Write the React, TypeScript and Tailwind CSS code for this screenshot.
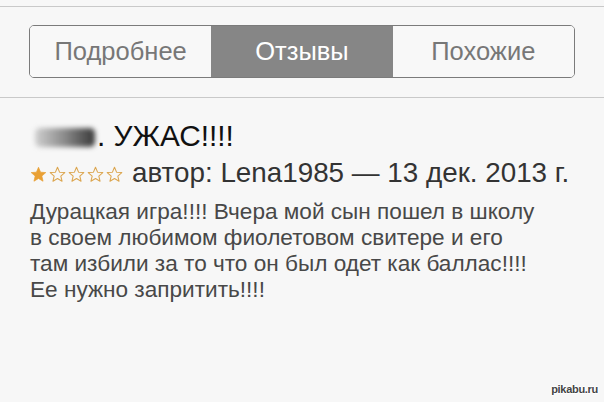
import React from "react";

function Star({ filled }: { filled: boolean }) {
  return (
    <svg width="17" height="17" viewBox="0 0 24 24" className="shrink-0">
      <path
        d="M12 1.8l2.9 6.9 7.4.6-5.6 4.9 1.7 7.3-6.4-3.9-6.4 3.9 1.7-7.3L1.7 9.3l7.4-.6z"
        fill={filled ? "#e9a034" : "none"}
        stroke={filled ? "#e9a034" : "#dca650"}
        strokeWidth={filled ? 1 : 1.5}
        strokeLinejoin="round"
      />
    </svg>
  );
}

export default function App() {
  return (
    <div className="w-[604px] h-[402px] bg-[#f7f7f7] relative overflow-hidden font-['Liberation_Sans',Arial,sans-serif]">
      <div className="h-[6px]" />
      <div className="h-px bg-[#c9c9c9]" />
      <div className="px-[29px] pt-[18px]">
        <div className="flex h-[53px] border border-[#7b7b7b] rounded-[5px] overflow-hidden text-[25.5px]">
          <div className="flex-1 flex items-center justify-center text-[#777] bg-[#f8f8f8]">Подробнее</div>
          <div className="flex-1 flex items-center justify-center text-white bg-[#868686]">Отзывы</div>
          <div className="flex-1 flex items-center justify-center text-[#777] bg-[#f8f8f8]">Похожие</div>
        </div>
      </div>
      <div className="h-[19px]" />
      <div className="h-px bg-[#c9c9c9]" />
      <div className="px-[30px] pt-[23px]">
        <div className="flex items-center h-[30px] text-[29.8px] leading-[30px] text-[#111]">
          <span className="inline-block ml-[5px] w-[60px] h-[19px] mt-[2px] rounded-[5px] bg-gradient-to-r from-[#d0d0d0] via-[#8a8a8a] to-[#3a3a3a] blur-[2.5px] mr-[2px]" />
          <span>. УЖАС!!!!</span>
        </div>
        <div className="flex items-center mt-[8px] h-[28px]">
          <div className="flex gap-[2px] mr-[9px] mt-[3px]">
            <Star filled />
            <Star filled={false} />
            <Star filled={false} />
            <Star filled={false} />
            <Star filled={false} />
          </div>
          <span className="text-[27.8px] leading-[28px] text-[#333]">автор: Lena1985 — 13 дек. 2013 г.</span>
        </div>
        <p className="mt-[11.5px] text-[22.6px] leading-[26px] text-[#484848]">
          Дурацкая игра!!!! Вчера мой сын пошел в школу
          <br />
          в своем любимом фиолетовом свитере и его
          <br />
          там избили за то что он был одет как баллас!!!!
          <br />
          Ее нужно запритить!!!!
        </p>
      </div>
      <div className="absolute right-[6px] bottom-[5px] text-[11px] font-bold text-[#444] tracking-[-0.3px] [text-shadow:1px_0_0_#fff,-1px_0_0_#fff,0_1px_0_#fff,0_-1px_0_#fff]">
        pikabu.ru
      </div>
    </div>
  );
}
